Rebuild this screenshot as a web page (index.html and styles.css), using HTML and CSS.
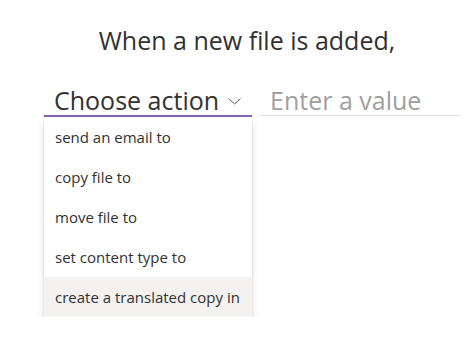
FILE: index.html
```html
<!DOCTYPE html>
<html lang="en">
<head>
    <meta charset="UTF-8">
    <title>Rule builder</title>
    <link rel="stylesheet" href="styles.css">
</head>
<body>
    <div class="rule">
        <h1 class="rule-title">When a new file is added,</h1>

        <div class="rule-row">
            <div class="picker">
                <div class="picker-field">
                    <span class="picker-label">Choose action</span>
                    <svg class="chevron" width="13" height="7" viewBox="0 0 13 7">
                        <path d="M0.5 0.5 L6.5 6 L12.5 0.5" fill="none" stroke="#605e5c" stroke-width="1"/>
                    </svg>
                </div>
                <div class="menu">
                    <div class="menu-item">send an email to</div>
                    <div class="menu-item">copy file to</div>
                    <div class="menu-item">move file to</div>
                    <div class="menu-item">set content type to</div>
                    <div class="menu-item is-hovered">create a translated copy in</div>
                </div>
            </div>
            <div class="value-field">
                <span class="placeholder">Enter a value</span>
            </div>
        </div>
    </div>
</body>
</html>
```

FILE: styles.css
```css
body {
    margin: 0;
    background: #fff;
    font-family: "Open Sans", "Noto Sans", sans-serif;
    color: #323130;
}
.rule {
    padding: 24px 0 0 20px;
}
.rule-title {
    margin: 0;
    text-align: center;
    font-size: 25px;
    font-weight: 400;
    line-height: 32px;
}
.rule-row {
    display: flex;
    align-items: flex-start;
    gap: 8px;
    margin: 25px 0 0 24px;
}
.picker {
    width: 208px;
}
.picker-field {
    display: flex;
    align-items: flex-end;
    gap: 9px;
    height: 34px;
    padding-left: 10px;
    border-bottom: 2px solid #8764b8;
}
.picker-label {
    font-size: 25px;
    line-height: 29px;
}
.chevron {
    margin-bottom: 10px;
}
.menu {
    background: #fff;
    box-shadow: 0 4px 8px rgba(0, 0, 0, 0.12), 0 0 2px rgba(0, 0, 0, 0.1);
}
.menu-item {
    height: 40px;
    line-height: 40px;
    padding-left: 11px;
    font-size: 15px;
}
.menu-item.is-hovered {
    background: #f3f2f1;
}
.value-field {
    display: flex;
    align-items: flex-end;
    width: 190px;
    height: 34px;
    padding-left: 10px;
    border-bottom: 1px solid #e1dfdd;
}
.placeholder {
    font-size: 25px;
    line-height: 29px;
    color: #a19f9d;
}
```
